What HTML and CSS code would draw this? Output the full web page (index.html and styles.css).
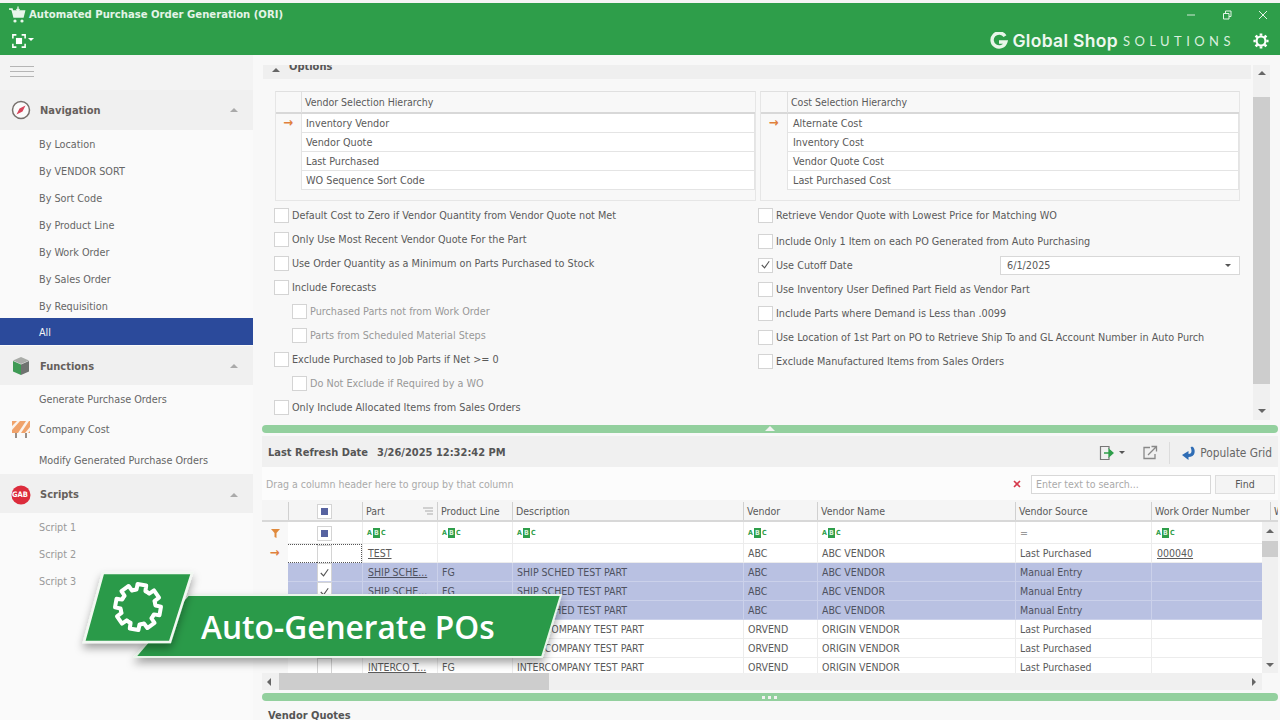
FILE: index.html
```html
<!DOCTYPE html>
<html lang="en">
<head>
<meta charset="utf-8">
<title>Automated Purchase Order Generation (ORI)</title>
<link rel="stylesheet" href="styles.css">
</head>
<body>
<div class="app">
  <header class="topbar">
    <div class="title-row">
      <svg class="cart" width="18" height="18" viewBox="0 0 18 18"><path d="M1 3h3l2 8h9l1.500-6H5" fill="#e8f6ea" stroke="#e8f6ea" stroke-width="1.500"/><circle cx="7" cy="15" r="1.600" fill="#e8f6ea"/><circle cx="14" cy="15" r="1.600" fill="#e8f6ea"/><path d="M10 .5v4M8.500 3l1.500 2 1.500-2" fill="none" stroke="#e8f6ea" stroke-width="1.300"/></svg>
      <span class="app-title">Automated Purchase Order Generation (ORI)</span>
      <div class="win-controls">
        <svg width="12" height="12" viewBox="0 0 12 12"><path d="M2 6h8" stroke="#cfe9d5" stroke-width="1"/></svg>
        <svg width="12" height="12" viewBox="0 0 12 12"><path d="M2.500 4.500h5.500v5.500h-5.500zM4.500 4.500v-2.500h5.500v5.500h-2" fill="none" stroke="#e6f5e9" stroke-width="1"/></svg>
        <svg width="12" height="12" viewBox="0 0 12 12"><path d="M2 2l8 8M10 2l-8 8" stroke="#e6f5e9" stroke-width="1"/></svg>
      </div>
    </div>
    <div class="tool-row">
      <svg width="14" height="14" viewBox="0 0 16 16"><path d="M1 5V1h4M11 1h4v4M15 11v4h-4M5 15H1v-4" fill="none" stroke="#fff" stroke-width="1.800"/><rect x="4.500" y="4.500" width="7" height="7" fill="#fff"/></svg>
      <span class="caret caret-white"></span>
      <div class="brand">
        <svg width="18" height="18" viewBox="0 0 18 18"><path d="M15 4.200A7 7 0 1 0 15.800 10H9" fill="none" stroke="#e8f6ea" stroke-width="3.400"/></svg>
        <span class="brand-name">Global Shop</span>
        <span class="brand-sub">SOLUTIONS</span>
      </div>
      <svg class="settings" width="16" height="16" viewBox="-9 -9 18 18"><circle r="5" fill="none" stroke="#fff" stroke-width="2.400"/><g stroke="#fff" stroke-width="3"><path d="M0-8.500v2.500M0 8.500v-2.500M-8.500 0h2.500M8.500 0h-2.500M-6-6l1.800 1.800M6 6l-1.800-1.800M-6 6l1.800-1.800M6-6l-1.800 1.800"/></g></svg>
    </div>
  </header>

  <div class="main">
    <nav class="sidebar">
      <div class="burger"><span></span><span></span><span></span></div>

      <div class="nav-head">
        <svg class="nav-icon" width="20" height="20" viewBox="0 0 20 20"><circle cx="10" cy="10" r="8.500" fill="#fbfbfb" stroke="#77706c" stroke-width="1.500"/><path d="M14.500 5.500l-6 3L5.500 14.500l6-3z" fill="#d8455a"/></svg>
        <span>Navigation</span><i class="tri-up"></i>
      </div>
      <a class="nav-item">By Location</a>
      <a class="nav-item">By VENDOR SORT</a>
      <a class="nav-item">By Sort Code</a>
      <a class="nav-item">By Product Line</a>
      <a class="nav-item">By Work Order</a>
      <a class="nav-item">By Sales Order</a>
      <a class="nav-item">By Requisition</a>
      <a class="nav-item active">All</a>

      <div class="nav-head head-fn">
        <svg class="nav-icon" width="20" height="20" viewBox="0 0 20 20"><path d="M10 1l8 3.500-8 3.500-8-3.500z" fill="#a9aca8"/><path d="M2 5l8 3.500V19l-8-3.500z" fill="#3f9a55"/><path d="M18 5l-8 3.500V19l8-3.500z" fill="#6f7370"/></svg>
        <span>Functions</span><i class="tri-up"></i>
      </div>
      <a class="nav-item">Generate Purchase Orders</a>
      <a class="nav-item item-icon item-tall">
        <svg class="nav-icon" width="20" height="20" viewBox="0 0 20 20"><rect x="1" y="2" width="18" height="12" fill="#f0a26a"/><path d="M1 7l5-5h3L1 11zM7 14l8-12h3L10 14zM14 14l5-6v4l-2 2z" fill="#fbf3ec"/><path d="M5 14v5M15 14v5" stroke="#9a8f88" stroke-width="2"/></svg>
        Company Cost
      </a>
      <a class="nav-item item-mod">Modify Generated Purchase Orders</a>

      <div class="nav-head head-sc">
        <svg class="nav-icon" width="20" height="20" viewBox="0 0 20 20"><circle cx="10" cy="10" r="9.500" fill="#dc2c3c"/></svg>
        <b class="gab">GAB</b>
        <span>Scripts</span><i class="tri-up"></i>
      </div>
      <a class="nav-item muted">Script 1</a>
      <a class="nav-item muted">Script 2</a>
      <a class="nav-item muted">Script 3</a>
    </nav>

    <section class="content">
      <div class="options">
        <div class="options-main">
          <div class="options-head"><i class="tri-up tri-dark"></i><b>Options</b></div>
          <div class="hierarchies">
            <div class="hier">
              <div class="hier-head"><span></span><span>Vendor Selection Hierarchy</span></div>
              <div class="hier-row"><span class="arrow">→</span><span>Inventory Vendor</span></div>
              <div class="hier-row"><span></span><span>Vendor Quote</span></div>
              <div class="hier-row"><span></span><span>Last Purchased</span></div>
              <div class="hier-row"><span></span><span>WO Sequence Sort Code</span></div>
            </div>
            <div class="hier hier-cost">
              <div class="hier-head"><span></span><span>Cost Selection Hierarchy</span></div>
              <div class="hier-row"><span class="arrow">→</span><span>Alternate Cost</span></div>
              <div class="hier-row"><span></span><span>Inventory Cost</span></div>
              <div class="hier-row"><span></span><span>Vendor Quote Cost</span></div>
              <div class="hier-row"><span></span><span>Last Purchased Cost</span></div>
            </div>
          </div>
          <div class="checks">
            <div class="check-col">
              <label class="check"><i class="box"></i>Default Cost to Zero if Vendor Quantity from Vendor Quote not Met</label>
              <label class="check"><i class="box"></i>Only Use Most Recent Vendor Quote For the Part</label>
              <label class="check"><i class="box"></i>Use Order Quantity as a Minimum on Parts Purchased to Stock</label>
              <label class="check"><i class="box"></i>Include Forecasts</label>
              <label class="check sub dim"><i class="box"></i>Purchased Parts not from Work Order</label>
              <label class="check sub dim"><i class="box"></i>Parts from Scheduled Material Steps</label>
              <label class="check"><i class="box"></i>Exclude Purchased to Job Parts if Net &gt;= 0</label>
              <label class="check sub dim"><i class="box"></i>Do Not Exclude if Required by a WO</label>
              <label class="check"><i class="box"></i>Only Include Allocated Items from Sales Orders</label>
            </div>
            <div class="check-col col-right">
              <label class="check first"><i class="box"></i>Retrieve Vendor Quote with Lowest Price for Matching WO</label>
              <label class="check"><i class="box"></i>Include Only 1 Item on each PO Generated from Auto Purchasing</label>
              <div class="check">
                <i class="box"><svg width="14" height="14" viewBox="0 0 14 14"><path d="M3 7l3 3 5-7" fill="none" stroke="#555" stroke-width="1.200"/></svg></i>Use Cutoff Date
                <div class="combo"><span>6/1/2025</span><span class="caret caret-dark"></span></div>
              </div>
              <label class="check"><i class="box"></i>Use Inventory User Defined Part Field as Vendor Part</label>
              <label class="check"><i class="box"></i>Include Parts where Demand is Less than .0099</label>
              <label class="check"><i class="box"></i>Use Location of 1st Part on PO to Retrieve Ship To and GL Account Number in Auto Purch</label>
              <label class="check"><i class="box"></i>Exclude Manufactured Items from Sales Orders</label>
            </div>
          </div>
        </div>
        <div class="vscroll opt-scroll"><i class="tri-up tri-dark"></i><div class="thumb"></div><i class="tri-down"></i></div>
      </div>

      <div class="splitter"><i class="split-tri"></i></div>

      <div class="grid-panel">
        <div class="grid-toolbar">
          <b class="refresh">Last Refresh Date</b><b class="refresh-val">3/26/2025 12:32:42 PM</b>
          <div class="toolbar-right">
            <svg width="16" height="16" viewBox="0 0 16 16"><path d="M10 4V1.500H1.500v13H10V12" fill="none" stroke="#777" stroke-width="1.200"/><path d="M5 8h7M10 4.500L14 8l-4 3.500z" fill="#2e9e4a" stroke="#2e9e4a" stroke-width="1.300"/></svg>
            <span class="caret caret-dark"></span>
            <svg class="tool-ext" width="15" height="15" viewBox="0 0 15 15"><path d="M7 2.500H1v11h11V9" fill="none" stroke="#888" stroke-width="1.300"/><path d="M5 10l8-8M8.500 1.500h5v5" fill="none" stroke="#888" stroke-width="1.300"/></svg>
            <span class="tool-sep"></span>
            <svg width="15" height="16" viewBox="0 0 15 16"><path d="M11 1.500c2.500 1 3 4 2.500 6.500-.5 2.500-3 4-6 4v3L1 10l6.500-4v3c2 0 3-1 3-3 0-1.500-.5-3-1-3.500z" fill="#2f6db5"/></svg>
            <span class="populate">Populate Grid</span>
          </div>
        </div>
        <div class="group-bar">
          <span class="group-hint">Drag a column header here to group by that column</span>
          <div class="search">
            <svg width="8" height="8" viewBox="0 0 8 8"><path d="M1 1l6 6M7 1L1 7" stroke="#d6394c" stroke-width="1.600"/></svg>
            <span class="search-input">Enter text to search...</span>
            <span class="find">Find</span>
          </div>
        </div>

        <div class="grid-head cols">
          <span class="cell-bare"></span><span></span>
          <span class="cell-chk"><i class="box tri-box"><u></u></i></span>
          <span class="part-head">Part<svg width="10" height="8" viewBox="0 0 10 8"><path d="M0 1h10M2 4h8M4 7h6" stroke="#c4c4c4" stroke-width="1.500"/></svg></span>
          <span>Product Line</span><span>Description</span><span>Vendor</span><span>Vendor Name</span><span>Vendor Source</span><span>Work Order Number</span><span>W</span>
        </div>

        <div class="grid-body">
          <div class="rows">
            <div class="row cols filter-row">
              <span class="ind"><svg width="9" height="9" viewBox="0 0 9 9"><path d="M0 0h9L5.500 4v5L3.500 8V4z" fill="#e08a3c"/></svg></span><span></span>
              <span class="cell-chk"><i class="box tri-box"><u></u></i></span>
              <span class="abc-cell"><i class="abc">A<b>B</b>C</i></span><span class="abc-cell"><i class="abc">A<b>B</b>C</i></span><span class="abc-cell"><i class="abc">A<b>B</b>C</i></span><span class="abc-cell"><i class="abc">A<b>B</b>C</i></span><span class="abc-cell"><i class="abc">A<b>B</b>C</i></span>
              <span class="eq">=</span><span class="abc-cell"><i class="abc">A<b>B</b>C</i></span>
            </div>
            <div class="row cols">
              <span class="ind arrow">→</span><span class="focus-a"></span><span class="cell-chk focus-b"><i class="box"></i></span>
              <span class="link">TEST</span><span></span><span></span><span>ABC</span><span>ABC VENDOR</span><span>Last Purchased</span><span class="link">000040</span>
            </div>
            <div class="row cols selected">
              <span class="ind"></span><span></span><span class="cell-chk"><i class="box"><svg width="14" height="14" viewBox="0 0 14 14"><path d="M3 7l3 3 5-7" fill="none" stroke="#555" stroke-width="1.200"/></svg></i></span>
              <span class="link">SHIP SCHE...</span><span>FG</span><span>SHIP SCHED TEST PART</span><span>ABC</span><span>ABC VENDOR</span><span>Manual Entry</span><span></span>
            </div>
            <div class="row cols selected">
              <span class="ind"></span><span></span><span class="cell-chk"><i class="box"><svg width="14" height="14" viewBox="0 0 14 14"><path d="M3 7l3 3 5-7" fill="none" stroke="#555" stroke-width="1.200"/></svg></i></span>
              <span class="link">SHIP SCHE...</span><span>FG</span><span>SHIP SCHED TEST PART</span><span>ABC</span><span>ABC VENDOR</span><span>Manual Entry</span><span></span>
            </div>
            <div class="row cols selected">
              <span class="ind"></span><span></span><span class="cell-chk"><i class="box"><svg width="14" height="14" viewBox="0 0 14 14"><path d="M3 7l3 3 5-7" fill="none" stroke="#555" stroke-width="1.200"/></svg></i></span>
              <span class="link">SHIP SCHE...</span><span>FG</span><span>SHIP SCHED TEST PART</span><span>ABC</span><span>ABC VENDOR</span><span>Manual Entry</span><span></span>
            </div>
            <div class="row cols">
              <span class="ind"></span><span></span><span class="cell-chk"><i class="box"></i></span>
              <span class="link">INTERCO T...</span><span>FG</span><span>INTERCOMPANY TEST PART</span><span>ORVEND</span><span>ORIGIN VENDOR</span><span>Last Purchased</span><span></span>
            </div>
            <div class="row cols">
              <span class="ind"></span><span></span><span class="cell-chk"><i class="box"></i></span>
              <span class="link">INTERCO T...</span><span>FG</span><span>INTERCOMPANY TEST PART</span><span>ORVEND</span><span>ORIGIN VENDOR</span><span>Last Purchased</span><span></span>
            </div>
            <div class="row cols">
              <span class="ind"></span><span></span><span class="cell-chk"><i class="box"></i></span>
              <span class="link">INTERCO T...</span><span>FG</span><span>INTERCOMPANY TEST PART</span><span>ORVEND</span><span>ORIGIN VENDOR</span><span>Last Purchased</span><span></span>
            </div>
          </div>
          <div class="vscroll grid-scroll"><i class="tri-up tri-dark"></i><div class="thumb"></div><i class="tri-down"></i></div>
        </div>

        <div class="hscroll">
          <i class="tri-left"></i><div class="hthumb"></div><i class="tri-right"></i>
        </div>
      </div>

      <div class="splitter split-low"><span class="dots"></span></div>
      <div class="quotes"><b>Vendor Quotes</b></div>
    </section>
  </div>

  <aside class="banner">
    <svg class="banner-art" width="500" height="110" viewBox="0 0 500 110">
      <defs>
        <filter id="sh" x="-10%" y="-20%" width="120%" height="150%"><feDropShadow dx="0" dy="5" stdDeviation="4" flood-color="#000" flood-opacity=".35"/></filter>
        <path id="cog" d="M-6.700-16.170L-4.530-16.900L-4.390-22.580L4.390-22.580L4.530-16.900L6.700-16.170" fill="none" stroke="#fff" stroke-width="4" stroke-linejoin="round" stroke-linecap="round"/>
      </defs>
      <polygon points="108,23 481,23 462,85 55,85 " fill="#2a9a48" stroke="#e9f5ea" stroke-width="2" filter="url(#sh)"/>
      <polygon points="23,1 112,1 90,70 4,70" fill="#2a9a48" stroke="#f2f8f2" stroke-width="2.500" filter="url(#sh)"/>
      <g transform="translate(58,35)">
        <use href="#cog" transform="rotate(10)"/><use href="#cog" transform="rotate(55)"/><use href="#cog" transform="rotate(100)"/><use href="#cog" transform="rotate(145)"/><use href="#cog" transform="rotate(190)"/><use href="#cog" transform="rotate(235)"/><use href="#cog" transform="rotate(280)"/><use href="#cog" transform="rotate(325)"/>
      </g>
    </svg>
    <span class="banner-text">Auto-Generate POs</span>
  </aside>
</div>
</body>
</html>
```

FILE: styles.css
```css
* { box-sizing: border-box; }
html, body { margin: 0; height: 100%; }
body {
  width: 1280px; height: 720px; overflow: hidden;
  font-family: "DejaVu Sans", "Noto Sans", sans-serif;
  font-stretch: condensed;
  font-size: 10.5px; color: #5a5a5a; background: #f8f8f8;
}
i { font-style: normal; display: block; }
.app { position: relative; width: 1280px; height: 720px; display: flex; flex-direction: column; padding-top: 3px; background: #f4f4f4; }

/* top bar */
.topbar { height: 52px; flex: none; background: #2e9e4a; color: #fff; display: flex; flex-direction: column; }
.title-row { height: 23px; flex: none; display: flex; align-items: center; padding-left: 8px; }
.cart { margin-right: 3px; }
.app-title { font-weight: 700; font-size: 11.2px; color: #e4f4e7; }
.win-controls { margin-left: auto; display: flex; gap: 24px; padding-right: 11px; }
.tool-row { height: 29px; flex: none; display: flex; align-items: center; padding-left: 12px; }
.caret { display: block; width: 0; height: 0; border-left: 3px solid transparent; border-right: 3px solid transparent; border-top: 3px solid #555; }
.caret-white { border-top-color: #fff; margin: -2px 0 0 2px; }
.brand { margin-left: auto; display: flex; align-items: center; }
.brand-name { font-family: Inter, sans-serif; font-stretch: normal; font-size: 17.5px; font-weight: 600; color: #eef8f0; margin-left: 4px; letter-spacing: .3px; }
.brand-sub { font-family: Lato, sans-serif; font-stretch: normal; font-size: 13px; color: #d9efdd; letter-spacing: 4.450px; margin-left: 5px; }
.settings { margin: 0 11px 0 18px; }

/* layout */
.main { flex: 1; display: flex; min-height: 0; }
.sidebar { width: 253px; flex: none; background: #fafafa; display: flex; flex-direction: column; font-size: 10.75px; }
.burger { height: 35px; flex: none; background: #f3f3f3; padding: 11px 0 0 10px; display: flex; flex-direction: column; gap: 4px; }
.burger span { display: block; width: 24px; height: 1px; background: #b5b5b5; }
.nav-head { height: 40px; flex: none; background: #f0f0f0; display: flex; align-items: center; padding: 0 15px 0 11px; position: relative; }
.nav-head span { font-weight: 700; color: #66605c; font-size: 11px; margin-left: 9px; }
.nav-icon { flex: none; }
.tri-up { width: 0; height: 0; border-left: 4px solid transparent; border-right: 4px solid transparent; border-bottom: 4px solid #aaa; margin-left: auto; }
.tri-dark { border-bottom-color: #666; }
.nav-item { display: flex; align-items: center; height: 27px; flex: none; padding: 2px 0 0 39px; color: #666; position: relative; }
.nav-item.active { background: #2b4a9b; color: #f4f4f4; margin-top: -1px; }
.item-tall { height: 32px; padding: 2px 0 0 11px; gap: 8px; }
.item-mod { height: 30px; padding-top: 2px; }
.head-fn { height: 39px; margin-top: 1px; padding-top: 1px; }
.head-sc { height: 39px; padding-top: 2px; }
.gab { position: absolute; left: 12px; top: 16px; font-size: 7.500px; color: #fff; font-weight: 700; }
.muted { color: #999; }

/* content */
.content { flex: 1; min-width: 0; padding-left: 9px; padding-right: 2px; display: flex; flex-direction: column; background: #f8f8f8; }
.options { height: 369px; flex: none; display: flex; padding: 10px 8px 0 1px; gap: 2px; }
.options-main { width: 988px; flex: none; font-size: 10.75px; }
.options-head { height: 14px; background: #efefef; display: flex; align-items: flex-end; gap: 9px; padding: 0 0 0 9px; overflow: hidden; font-size: 11px; color: #555; line-height: 14px; }
.options-head .tri-up { margin: 0 0 7px 0; }
.options-head b { margin-top: -10px; position: relative; top: -5px; }
.hierarchies { display: flex; gap: 4px; padding: 12px 0 0 12px; }
.hier { width: 481px; height: 110px; border: 1px solid #e6e6e6; border-top-color: #e0e0e0; }
.hier-cost { width: 480px; }
.hier-head, .hier-row { display: grid; grid-template-columns: 25px 1fr; }
.hier-head { height: 22px; align-items: center; border-bottom: 2px solid #d8d8d8; font-size: 10.5px; }
.hier-head span:last-child { border-left: 1px solid #e0e0e0; height: 100%; padding-left: 3px; line-height: 21px; }
.hier-row { height: 19px; grid-template-rows: 19px; }
.hier-row span:last-child { background: #fff; border: 1px solid #e4e4e4; border-top: 0; padding: 1px 0 0 4px; line-height: 17px; overflow: hidden; }
.hier-cost .hier-head, .hier-cost .hier-row { grid-template-columns: 26px 1fr; }
.hier-cost .hier-row span:last-child { padding-left: 5px; }
.arrow { color: #e0803c; text-align: center; font-size: 13px; line-height: 18px; font-weight: 700; }
.checks { display: flex; padding: 2px 0 0 11px; }
.check-col { width: 485px; flex: none; }
.col-right { width: 490px; margin-left: -1px; }
.check { height: 24px; display: flex; align-items: center; gap: 3px; }
.first { margin-bottom: 2px; }
.sub { padding-left: 18px; }
.dim { color: #999; }
.box { width: 15px; height: 15px; flex: none; background: #fff; border: 1px solid #d4d4d4; display: flex; align-items: center; justify-content: center; }
.combo { margin-left: auto; width: 240px; height: 19px; margin-right: 8px; background: #fff; border: 1px solid #d8d8d8; display: flex; align-items: center; justify-content: space-between; padding: 0 8px 0 6px; }
.vscroll { width: 17px; flex: none; display: flex; flex-direction: column; align-items: center; background: #f0f0f0; }
.vscroll .tri-up { margin: 6px 0 0; }
.vscroll .thumb { background: #cdcdcd; width: 100%; }
.tri-down { width: 0; height: 0; border-left: 4px solid transparent; border-right: 4px solid transparent; border-top: 4px solid #666; margin-top: auto; margin-bottom: 7px; }
.opt-scroll .thumb { height: 287px; margin-top: 22px; }
.opt-scroll { height: 355px; }
.splitter { height: 8px; flex: none; background: #93d09e; border-radius: 4px; margin-top: 1px; display: flex; justify-content: center; position: relative; }
.split-tri { width: 0; height: 0; border-left: 5px solid transparent; border-right: 5px solid transparent; border-bottom: 5px solid #f2f2f2; margin-top: 1px; margin-left: 0; }
.split-low { margin-top: 3px; }
.dots { width: 16px; height: 3px; margin-top: 3px; background: repeating-linear-gradient(90deg, #f2f2f2 0 3px, transparent 3px 6px); }

/* grid */
.grid-panel { margin-top: 3px; flex: none; height: 254px; display: flex; flex-direction: column; overflow: hidden; }
.grid-toolbar { height: 31px; flex: none; background: #f0f0f0; display: flex; align-items: center; padding: 2px 6px 0; font-size: 11px; color: #555; }
.refresh-val { margin-left: 9px; }
.toolbar-right { margin-left: auto; display: flex; align-items: center; font-weight: 400; }
.toolbar-right .caret { margin-left: 4px; }
.tool-ext { margin-left: 18px; }
.tool-sep { width: 1px; height: 22px; background: #dcdcdc; margin: 0 11px; }
.populate { margin-left: 4px; font-size: 11.8px; color: #666; }
.group-bar { height: 33px; flex: none; background: #fcfcfc; display: flex; align-items: center; padding: 0 3px 0 4px; }
.group-hint { color: #aaa; }
.search { margin-left: auto; display: flex; align-items: center; padding-top: 1px; }
.search-input { width: 180px; height: 19px; margin-left: 10px; background: #fff; border: 1px solid #d8d8d8; padding-left: 4px; line-height: 17px; color: #aaa; }
.find { width: 60px; height: 19px; margin-left: 4px; background: #f4f4f4; border: 1px solid #ddd; text-align: center; line-height: 17px; color: #555; }
.cols { display: grid; grid-template-columns: 26px 29px 45px 75px 75px 231px 74px 198px 136px 119px 1fr; }
.grid-head { height: 22px; flex: none; background: #f5f5f5; border-bottom: 2px solid #d8d8d8; padding-top: 2px; align-items: center; white-space: nowrap; overflow: hidden; }
.grid-head > span { height: 18px; border-left: 1px solid #d0d0d0; padding-left: 3px; line-height: 19px; }
.grid-head > .cell-bare { border-left: 0; }
.part-head { display: flex; justify-content: space-between; align-items: center; padding-right: 4px; }
.grid-head > .cell-chk { border-left: 0; padding-left: 0; }
.cell-chk { display: flex; justify-content: flex-start; align-items: center; }
.tri-box u { display: block; width: 7px; height: 7px; background: #5763a0; }
.grid-body { flex: 1; display: flex; min-height: 0; }
.rows { width: 1000px; flex: none; overflow: hidden; }
.row { height: 19px; background: #fff; align-items: stretch; white-space: nowrap; overflow: hidden; }
.row > span { padding-left: 4px; line-height: 18px; border-left: 1px solid #ececec; border-bottom: 1px solid #ececec; overflow: hidden; }
.row > span:nth-child(2), .row > .cell-chk { border-left: 0; padding-left: 0; }
.row > .ind { border-left: 0; border-bottom: 0; padding-left: 0; background: #f8f8f8; text-align: center; display: block; }
.row > .cell-chk .box { height: 18px; border-bottom: 0; }
.filter-row { height: 22px; background: #fff; }
.filter-row > span { line-height: 21px; display: flex; align-items: center; padding-top: 1px; }
.filter-row > .ind { display: flex; justify-content: center; align-items: center; }
.filter-row .cell-chk .box { height: 15px; border-bottom: 1px solid #d4d4d4; }
.selected { background: #b9c1e2; color: #4e5160; }
.selected > span { border-left-color: #cbd1ea; border-bottom-color: #cbd1ea; }
.link { text-decoration: underline; }
.row > span.link { padding-left: 5px; }
.eq { color: #999; }
.row > .focus-a, .row > .focus-b { border-top: 1px dotted #555; border-bottom: 1px dotted #555; }
.row > .focus-a { border-left: 1px dotted #555; }
.row > .focus-b { border-right: 1px dotted #555; }
.abc { font-size: 7px; font-weight: 700; color: #2e9e4a; display: flex; align-items: center; letter-spacing: 0; }
.abc b { display: block; width: 7px; height: 10px; margin: 0 1px; background: #2e9e4a; color: #d8efdd; text-align: center; line-height: 10px; }
.grid-scroll { height: 151px; width: 16px; }
.grid-scroll .thumb { height: 16px; margin-top: 8px; }
.grid-scroll .tri-up { margin-top: 7px; }
.grid-scroll .tri-down { margin-bottom: 6px; }
.hscroll { height: 17px; flex: none; width: 1000px; background: #f0f0f0; display: flex; align-items: center; padding: 0 6px 0 5px; }
.tri-left { width: 0; height: 0; border-top: 4px solid transparent; border-bottom: 4px solid transparent; border-right: 4px solid #666; }
.tri-right { width: 0; height: 0; border-top: 4px solid transparent; border-bottom: 4px solid transparent; border-left: 4px solid #666; margin-left: auto; }
.hthumb { width: 270px; height: 17px; background: #cdcdcd; margin-left: 8px; }
.quotes { padding: 8px 0 0 6px; font-size: 11px; color: #555; }

/* callout */
.banner { position: absolute; left: 80px; top: 572px; width: 500px; height: 110px; }
.banner-art { display: block; overflow: visible; }
.banner-text { position: absolute; left: 121px; top: 33px; font-family: "Open Sans", sans-serif; font-stretch: normal; font-weight: 600; font-size: 31.7px; line-height: 44px; color: #fff; white-space: nowrap; }
```
